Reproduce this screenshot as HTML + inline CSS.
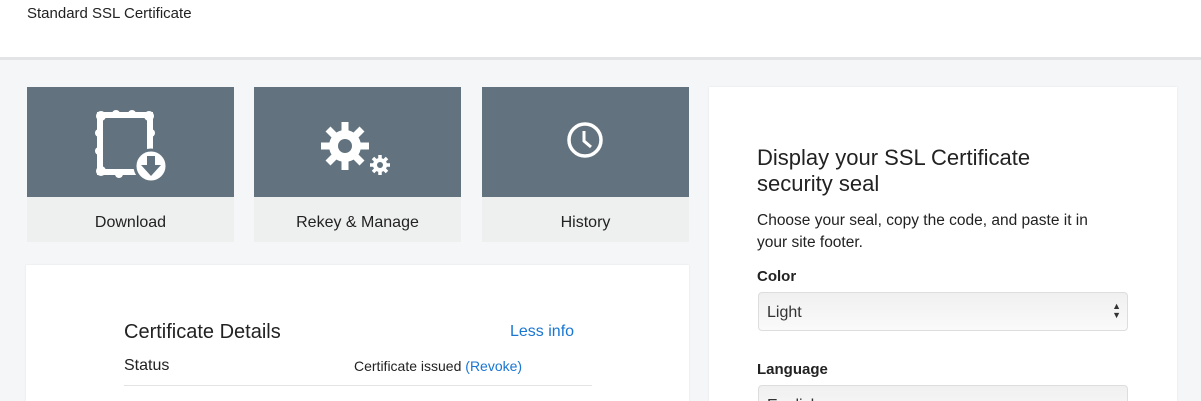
<!DOCTYPE html>
<html style="overflow:hidden;height:401px"><head><style>
*{margin:0;padding:0;box-sizing:border-box}
body{width:1201px;height:401px;overflow:hidden;background:#f5f6f7;font-family:"Liberation Sans",sans-serif;color:#222;position:relative}
.top{position:absolute;left:0;top:0;width:1201px;height:60px;background:#fff;border-bottom:3px solid #e3e4e5}
.top span{position:absolute;left:27px;top:5px;font-size:15px;color:#222}
.tile{position:absolute;top:87px;width:207px;height:155px}
.tile .ic{height:110px;background:#62737f;position:relative}
.tile .lb{height:45px;background:#eeefef;text-align:center;line-height:51px;font-size:16px;color:#222}
.card{position:absolute;background:#fff;box-shadow:0 0 2px rgba(0,0,0,.08);overflow:hidden}
.sel{position:absolute;left:49px;width:370px;height:39px;border:1px solid #ddd;border-radius:4px;background:linear-gradient(#f0f0f0,#fafafa);font-size:16px;color:#333;padding:11px 0 0 8px}
</style></head><body>
<div class="top"><span>Standard SSL Certificate</span></div>

<div class="tile" style="left:27px"><div class="ic">
<svg width="207" height="110" style="position:absolute;left:0;top:0">
<g fill="#fff">
<rect x="73" y="28" width="50" height="57" fill="none" stroke="#fff" stroke-width="6"/>
<circle cx="74" cy="29" r="5"/><circle cx="89" cy="27" r="4"/><circle cx="105" cy="27" r="4"/><circle cx="122" cy="29" r="5"/>
<circle cx="72" cy="46" r="4"/><circle cx="72" cy="64" r="4"/><circle cx="74" cy="84" r="5"/><circle cx="92" cy="87" r="4"/>
<circle cx="124" cy="46" r="4"/>
<circle cx="124" cy="79" r="16" stroke="#62737f" stroke-width="3"/>
</g>
<path d="M120 69h8v9h6l-10 11-10-11h6z" fill="#62737f"/>
</svg></div><div class="lb">Download</div></div>

<div class="tile" style="left:254px"><div class="ic">
<svg width="207" height="110" style="position:absolute;left:0;top:0">
<g fill="#fff">
<circle cx="91" cy="59" r="16"/>
<g stroke="#fff" stroke-width="7">
<line x1="91" y1="35" x2="91" y2="83"/><line x1="67" y1="59" x2="115" y2="59"/>
<line x1="74" y1="42" x2="108" y2="76"/><line x1="108" y1="42" x2="74" y2="76"/>
</g>
<circle cx="126" cy="78" r="7"/>
<g stroke="#fff" stroke-width="3.5">
<line x1="126" y1="68" x2="126" y2="88"/><line x1="116" y1="78" x2="136" y2="78"/>
<line x1="119" y1="71" x2="133" y2="85"/><line x1="133" y1="71" x2="119" y2="85"/>
</g>
</g>
<circle cx="91" cy="59" r="7" fill="#62737f"/>
<circle cx="126" cy="78" r="3" fill="#62737f"/>
</svg></div><div class="lb">Rekey &amp; Manage</div></div>

<div class="tile" style="left:482px"><div class="ic">
<svg width="207" height="110" style="position:absolute;left:0;top:0">
<circle cx="103" cy="53" r="16" fill="none" stroke="#fff" stroke-width="3.5"/>
<path d="M102 44v10l7 6" fill="none" stroke="#fff" stroke-width="3"/>
</svg></div><div class="lb">History</div></div>

<div class="card" style="left:26px;top:265px;width:663px;height:136px">
<div style="position:absolute;left:98px;top:56px;font-size:20px;color:#222">Certificate Details</div>
<div style="position:absolute;left:484px;top:58px;font-size:16px;color:#1976d2">Less info</div>
<div style="position:absolute;left:98px;top:92px;font-size:16px">Status</div>
<div style="position:absolute;left:328px;top:93px;font-size:14px">Certificate issued <span style="color:#1976d2">(Revoke)</span></div>
<div style="position:absolute;left:98px;top:120px;width:468px;height:1px;background:#e3e3e3"></div>
</div>

<div class="card" style="left:709px;top:87px;width:468px;height:314px">
<div style="position:absolute;left:48px;top:58px;font-size:22px;line-height:26px;color:#222">Display your SSL Certificate<br>security seal</div>
<div style="position:absolute;left:48px;top:123px;font-size:15.5px;line-height:22px;color:#222">Choose your seal, copy the code, and paste it in<br>your site footer.</div>
<div style="position:absolute;left:48px;top:181px;font-size:15px;font-weight:bold">Color</div>
<div class="sel" style="top:205px">Light<span style="position:absolute;right:6px;top:9px;font-size:9px;line-height:9px">▲<br>▼</span></div>
<div style="position:absolute;left:48px;top:274px;font-size:15px;font-weight:bold">Language</div>
<div class="sel" style="top:298px">English</div>
</div>
</body></html>
